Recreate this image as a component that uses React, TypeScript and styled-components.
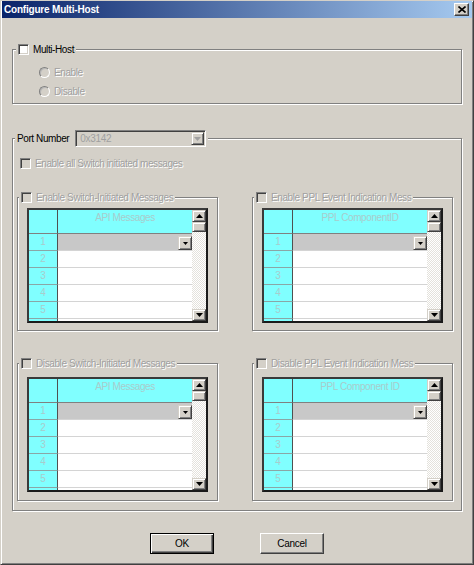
import React from 'react';
import styled, { createGlobalStyle } from 'styled-components';

const FACE = '#d4d0c8';
const SHADOW = '#808080';
const DARK = '#404040';
const CYAN = '#80ffff';
const GREYTEXT = '#a0a0a0';
const FAINT = '#a8cccc';

const GlobalStyle = createGlobalStyle`
  html, body { margin: 0; padding: 0; background: #fff; }
  body {
    font-family: "Liberation Sans", Arial, sans-serif;
    font-size: 10px;
  }
  * { box-sizing: border-box; }
`;

const Window = styled.div`
  width: 474px;
  height: 565px;
  overflow: hidden;
  display: flex;
  flex-direction: column;
  background: ${FACE};
  border: 1px solid;
  border-color: ${FACE} ${DARK} ${DARK} ${FACE};
  box-shadow: inset 1px 1px #fff, inset -1px -1px ${SHADOW};
  padding: 0 1px 1px;
`;

const TitleBar = styled.div`
  height: 17px;
  flex: none;
  display: flex;
  align-items: center;
  justify-content: space-between;
  padding: 0 3px 0 2px;
  background: linear-gradient(to right, #0a246a, #a6caf0);
  color: #fff;
  font-weight: bold;
  font-size: 10px;
  letter-spacing: -0.2px;
`;

const CloseButton = styled.div`
  width: 15px;
  height: 13px;
  display: flex;
  align-items: center;
  justify-content: center;
  background: ${FACE};
  border: 1px solid;
  border-color: #fff ${DARK} ${DARK} #fff;
  box-shadow: inset -1px -1px ${SHADOW};
`;

const Body = styled.div`
  flex: 1;
  display: flex;
  flex-direction: column;
  padding: 25px 10px 0;
`;

const Group = styled.fieldset<{ $gap?: number }>`
  margin: ${p => p.$gap ?? 0}px 0 0;
  padding: 0;
  min-width: 0;
  border: 1px solid ${SHADOW};
  box-shadow: inset 1px 1px #fff, 1px 1px #fff;
`;

const Legend = styled.legend<{ $offset: number }>`
  margin-left: ${p => p.$offset}px;
  padding: 0 2px;
  display: flex;
  align-items: center;
  gap: 4px;
  background: ${FACE};
  line-height: 13px;
`;

const Content = styled.div<{ $pad: string }>`
  display: flex;
  flex-direction: column;
  padding: ${p => p.$pad};
`;

const Label = styled.span<{ $disabled?: boolean }>`
  color: ${p => (p.$disabled ? GREYTEXT : '#000')};
  text-shadow: ${p => (p.$disabled ? '1px 1px #fff' : 'none')};
  letter-spacing: -0.4px;
  white-space: nowrap;
  line-height: 13px;
`;

const CheckBox = styled.span<{ $disabled?: boolean }>`
  width: 11px;
  height: 11px;
  flex: none;
  background: ${p => (p.$disabled ? FACE : '#fff')};
  border: 1px solid;
  border-color: ${SHADOW} #fff #fff ${SHADOW};
  box-shadow: inset 1px 1px ${DARK}, inset -1px -1px ${FACE};
`;

const Radio = styled.span`
  width: 11px;
  height: 11px;
  flex: none;
  border-radius: 50%;
  background: ${FACE};
  border: 1px solid;
  border-color: ${SHADOW} #fff #fff ${SHADOW};
  box-shadow: inset 1px 1px #b8b8b8;
`;

const OptionRow = styled.div<{ $height: number; $indent?: number }>`
  height: ${p => p.$height}px;
  display: flex;
  align-items: center;
  gap: 4px;
  margin-left: ${p => p.$indent ?? 0}px;
`;

const Combo = styled.div`
  width: 131px;
  height: 17px;
  display: flex;
  align-items: stretch;
  padding: 1px;
  margin-left: 2px;
  background: ${FACE};
  border: 1px solid;
  border-color: ${SHADOW} #fff #fff ${SHADOW};
  box-shadow: inset 1px 1px ${DARK}, inset -1px -1px ${FACE};
`;

const ComboText = styled.span`
  flex: 1;
  padding-left: 3px;
  line-height: 13px;
  color: ${GREYTEXT};
  letter-spacing: -0.3px;
`;

const Bevel = styled.div<{ $w: number; $h: number }>`
  width: ${p => p.$w}px;
  height: ${p => p.$h}px;
  flex: none;
  display: flex;
  align-items: center;
  justify-content: center;
  background: ${FACE};
  border: 1px solid;
  border-color: ${FACE} ${DARK} ${DARK} ${FACE};
  box-shadow: inset 1px 1px #fff, inset -1px -1px ${SHADOW};
`;

const Quad = styled.div`
  display: grid;
  grid-template-columns: 201px 201px;
  column-gap: 34px;
  row-gap: 26px;
  margin-top: 21px;
`;

const TableFrame = styled.div`
  width: 181px;
  height: 115px;
  display: flex;
  border: 2px solid;
  border-color: #3a3a3a #1a1a1a #1a1a1a #3a3a3a;
  background: #fff;
`;

const Grid = styled.div`
  flex: 1;
  min-width: 0;
  overflow: hidden;
  display: grid;
  grid-template-columns: 29px 1fr;
  grid-template-rows: 24px;
  grid-auto-rows: 17px;
  align-content: start;
`;

const HeadCell = styled.div<{ $corner?: boolean }>`
  background: ${CYAN};
  border-bottom: 1px solid ${SHADOW};
  border-right: ${p => (p.$corner ? '1px solid #505050' : 'none')};
  color: ${FAINT};
  text-align: center;
  padding-top: 2px;
  letter-spacing: -0.4px;
  white-space: nowrap;
  overflow: hidden;
`;

const RowHead = styled.div`
  background: ${CYAN};
  border-bottom: 1px solid #8aa6a6;
  border-right: 1px solid #505050;
  color: ${FAINT};
  text-align: center;
  line-height: 16px;
`;

const DataCell = styled.div<{ $active?: boolean }>`
  background: ${p => (p.$active ? '#c8c8c8' : '#fff')};
  border-bottom: 1px solid #d4d4d4;
  display: flex;
  justify-content: flex-end;
  align-items: flex-end;
`;

const ScrollBar = styled.div`
  width: 14px;
  flex: none;
  display: flex;
  flex-direction: column;
`;

const Track = styled.div`
  flex: 1;
  background: repeating-conic-gradient(#fff 0 25%, #e4e2dc 0 50%) 0 0 / 2px 2px;
`;

const ButtonRow = styled.div`
  display: flex;
  justify-content: center;
  gap: 46px;
  margin-top: 22px;
`;

const PushButton = styled.button<{ $default?: boolean }>`
  width: 64px;
  height: 21px;
  padding: 0;
  font-family: "Liberation Sans", Arial, sans-serif;
  font-size: 10px;
  letter-spacing: -0.3px;
  color: #000;
  background: ${FACE};
  border: 1px solid;
  border-color: ${p => (p.$default ? '#000' : `#fff ${DARK} ${DARK} #fff`)};
  box-shadow: ${p =>
    p.$default
      ? `inset 1px 1px #fff, inset -1px -1px ${DARK}, inset -2px -2px ${SHADOW}`
      : `inset -1px -1px ${SHADOW}`};
`;

const Arrow = ({ dir, w = 7, color = '#000' }: { dir: 'up' | 'down'; w?: number; color?: string }) => {
  const h = Math.ceil(w / 2);
  const d = dir === 'down' ? `M0 0H${w}L${w / 2} ${h}Z` : `M0 ${h}H${w}L${w / 2} 0Z`;
  return (
    <svg width={w} height={h} viewBox={`0 0 ${w} ${h}`}>
      <path d={d} fill={color} />
    </svg>
  );
};

const CloseGlyph = () => (
  <svg width="8" height="7" viewBox="0 0 8 7">
    <path d="M0.5 0.5L7.5 6.5M7.5 0.5L0.5 6.5" stroke="#000" strokeWidth="1.6" />
  </svg>
);

function MessageTable({ title }: { title: string }) {
  // the sixth row only peeks out under the fifth, so it carries no number
  const rows = [1, 2, 3, 4, 5, 6];
  return (
    <TableFrame>
      <Grid>
        <HeadCell $corner />
        <HeadCell>{title}</HeadCell>
        {rows.map(n => (
          <React.Fragment key={n}>
            <RowHead>{n < 6 ? n : ''}</RowHead>
            <DataCell $active={n === 1}>
              {n === 1 && (
                <Bevel $w={14} $h={14}>
                  <Arrow dir="down" w={5} />
                </Bevel>
              )}
            </DataCell>
          </React.Fragment>
        ))}
      </Grid>
      <ScrollBar>
        <Bevel $w={14} $h={12}>
          <Arrow dir="up" />
        </Bevel>
        <Bevel $w={14} $h={10} />
        <Track />
        <Bevel $w={14} $h={12}>
          <Arrow dir="down" />
        </Bevel>
      </ScrollBar>
    </TableFrame>
  );
}

function SubGroup({ label, column, lower }: { label: string; column: string; lower?: boolean }) {
  return (
    <Group>
      <Legend $offset={1}>
        <CheckBox $disabled />
        <Label $disabled>{label}</Label>
      </Legend>
      <Content $pad={lower ? '7px 9px 8px' : '4px 9px 7px'}>
        <MessageTable title={column} />
      </Content>
    </Group>
  );
}

export default function App() {
  return (
    <>
      <GlobalStyle />
      <Window>
        <TitleBar>
          <span>Configure Multi-Host</span>
          <CloseButton>
            <CloseGlyph />
          </CloseButton>
        </TitleBar>
        <Body>
          <Group>
            <Legend $offset={3}>
              <CheckBox />
              <Label>Multi-Host</Label>
            </Legend>
            <Content $pad="7px 0 2px 26px">
              <OptionRow $height={19}>
                <Radio />
                <Label $disabled>Enable</Label>
              </OptionRow>
              <OptionRow $height={19}>
                <Radio />
                <Label $disabled>Disable</Label>
              </OptionRow>
            </Content>
          </Group>

          <Group $gap={26}>
            <Legend $offset={2}>
              <Label>Port Number</Label>
              <Combo>
                <ComboText>0x3142</ComboText>
                <Bevel $w={13} $h={13}>
                  <Arrow dir="down" color={GREYTEXT} />
                </Bevel>
              </Combo>
            </Legend>
            <Content $pad="10px 8px 9px 4px">
              <OptionRow $height={13} $indent={3}>
                <CheckBox $disabled />
                <Label $disabled>Enable all Switch initiated messages</Label>
              </OptionRow>
              <Quad>
                <SubGroup label="Enable Switch-Initiated Messages" column="API Messages" />
                <SubGroup label="Enable PPL Event Indication Mess" column="PPL ComponentID" />
                <SubGroup label="Disable Switch-Initiated Messages" column="API Messages" lower />
                <SubGroup label="Disable PPL Event Indication Mess" column="PPL Component ID" lower />
              </Quad>
            </Content>
          </Group>

          <ButtonRow>
            <PushButton $default>OK</PushButton>
            <PushButton>Cancel</PushButton>
          </ButtonRow>
        </Body>
      </Window>
    </>
  );
}
